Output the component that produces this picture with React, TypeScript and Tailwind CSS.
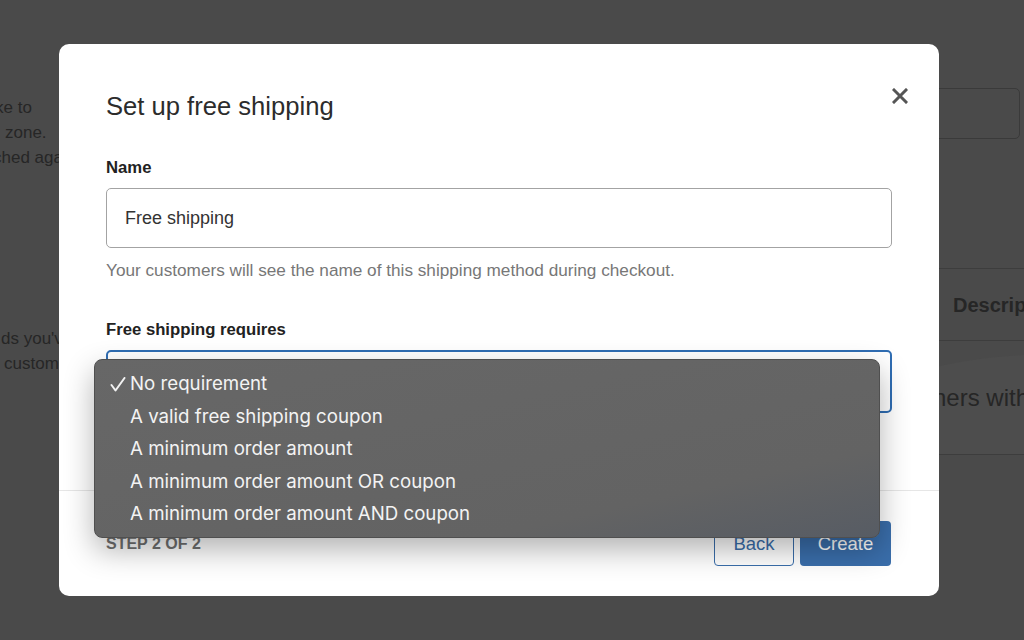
import React from "react";

const items = [
  "No requirement",
  "A valid free shipping coupon",
  "A minimum order amount",
  "A minimum order amount OR coupon",
  "A minimum order amount AND coupon",
];

function CloseIcon() {
  return (
    <svg width="16" height="16" viewBox="0 0 16 16" className="block">
      <path d="M2 2 L14 14 M14 2 L2 14" stroke="#555555" strokeWidth="3" strokeLinecap="square" />
    </svg>
  );
}

function Check() {
  return (
    <svg width="16" height="15" viewBox="0 0 16 15" className="block">
      <path d="M1.5 8 L5.5 13.5 L14.5 1" fill="none" stroke="#f2f2f2" strokeWidth="2" strokeLinecap="round" strokeLinejoin="round" />
    </svg>
  );
}

export default function App() {
  return (
    <div className="relative h-[640px] w-[1024px] overflow-hidden bg-[#4a4a4a] font-['Liberation_Sans',Arial,sans-serif]">
      {/* background page */}
      <div className="flex h-full w-full justify-between">
        <div className="w-[59px] overflow-hidden pt-[95px] text-[17px] leading-[25px] text-[#262626]">
          <div className="ml-[-5px] whitespace-pre">ke to</div>
          <div className="ml-[5px] whitespace-pre">zone.</div>
          <div className="ml-[-7px] whitespace-pre">ched against</div>
          <div className="mt-[156px] ml-[1px] whitespace-pre">ds you've</div>
          <div className="ml-[4px] whitespace-pre">customers</div>
        </div>
        <div className="w-[150px] overflow-hidden pt-[88px] text-[#262626]">
          <div className="mr-[4px] h-[51px] rounded-[5px] border border-[#3a3a3a]" />
          <div className="mt-[129px] border-t border-[#3d3d3d]" />
          <div className="flex h-[71px] items-center whitespace-nowrap pl-[79px] text-[20px] font-bold">Description</div>
          <div className="border-t border-[#3d3d3d]" />
          <div className="relative flex h-[113px] items-center whitespace-nowrap pl-[59px] text-[24px]">
            <svg className="absolute inset-0" width="150" height="113" viewBox="0 0 150 113" preserveAspectRatio="none">
              <path d="M0 48 C40 30 80 18 150 14 L150 113 L0 113 Z" fill="#4d4d4d" />
            </svg>
            <span className="relative">ners with</span>
          </div>
          <div className="border-t border-[#3d3d3d]" />
        </div>
      </div>

      {/* modal layer */}
      <div className="absolute inset-0 pl-[59px] pt-[44px]">
        <div className="flex h-[552px] w-[880px] flex-col rounded-[10px] bg-white">
          <div className="px-[47px] pt-[44px]">
            <div className="flex items-start justify-between">
              <h1 className="mt-[2px] text-[25.6px] font-normal leading-[32px] text-[#2c2c2c]">Set up free shipping</h1>
              <button className="mr-[-16px] p-0">
                <CloseIcon />
              </button>
            </div>
            <div className="mt-[34px] text-[16.7px] font-bold leading-[24px] text-[#222222]">Name</div>
            <div className="mt-[8px] flex h-[60px] items-center rounded-[5px] border border-[#a3a3a3] px-[18px] text-[18px] text-[#333333]">
              Free shipping
            </div>
            <div className="mt-[10px] text-[17.2px] leading-[24px] text-[#777777]">
              Your customers will see the name of this shipping method during checkout.
            </div>
            <div className="mt-[36px] text-[16.7px] font-bold leading-[24px] text-[#222222]">Free shipping requires</div>
            <div className="relative mt-[8px]">
              <div className="flex h-[63px] w-[786px] items-center rounded-[5px] border-2 border-[#2f6db3] px-[18px] text-[18px] text-[#333333]">
                No requirement
              </div>
              <div className="absolute left-[-12px] top-[9px] z-10 w-[786px] rounded-[8px] border border-[#4f4f4f] bg-linear-to-br from-[#676767] via-[#636363] via-75% to-[#575c64] pb-[6px] pt-[8px] shadow-[0_12px_30px_rgba(0,0,0,0.3)] font-['Inter',sans-serif] text-[18.7px] text-[#f3f3f3]">
                {items.map((t, i) => (
                  <div key={t} className="flex h-[32.5px] items-center">
                    <div className="w-[35px] shrink-0 pl-[15px]">{i === 0 ? <Check /> : null}</div>
                    <span>{t}</span>
                  </div>
                ))}
              </div>
            </div>
          </div>
          <div className="mt-[77px] h-px w-full bg-[#e6e6e6]" />
          <div className="flex items-center justify-between px-[47px] pt-[30px]">
            <div className="mt-[1px] text-[16px] font-bold leading-[24px] text-[#707070]">STEP 2 OF 2</div>
            <div className="mr-[1px] flex gap-[6px]">
              <button className="flex h-[45px] w-[80px] items-center justify-center rounded-[4px] border border-[#3a6eab] bg-white text-[18.5px] text-[#3a6eab]">
                Back
              </button>
              <button className="flex h-[45px] w-[91px] items-center justify-center rounded-[4px] bg-[#3a6eab] text-[18.5px] text-white">
                Create
              </button>
            </div>
          </div>
        </div>
      </div>
    </div>
  );
}
